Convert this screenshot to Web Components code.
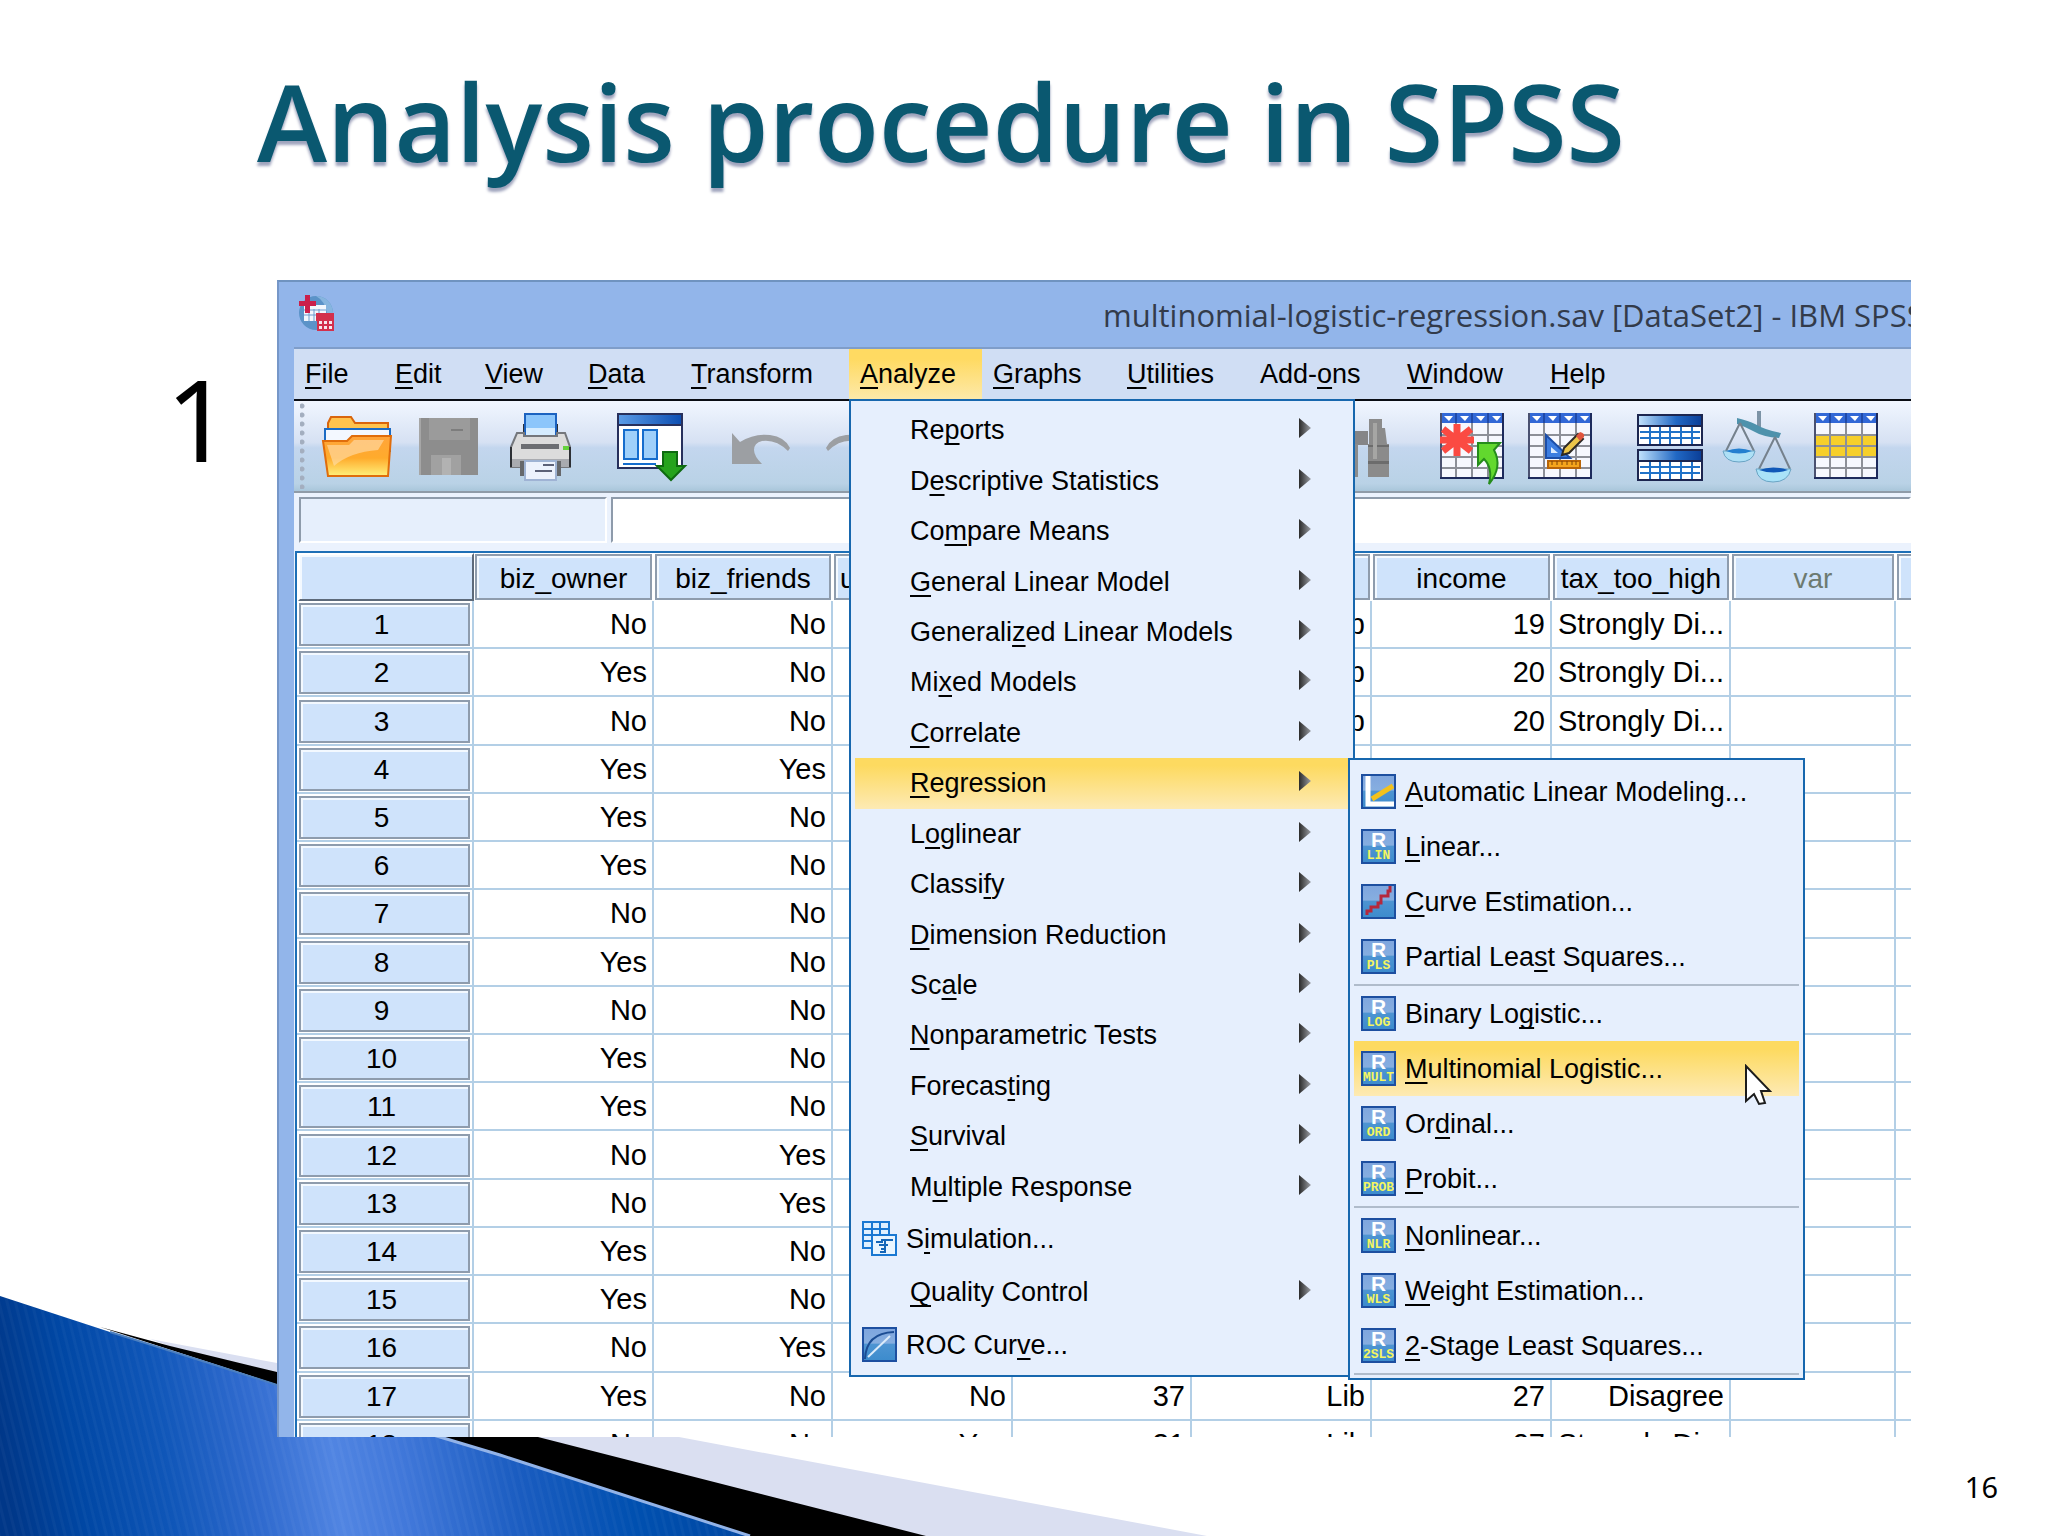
<!DOCTYPE html>
<html lang="en">
<head>
<meta charset="utf-8">
<title>Analysis procedure in SPSS</title>
<style>
body {
  margin: 0;
  background: #fff;
}
</style>
</head>
<body>
<slide-page number="16">
  <span slot="title">Analysis procedure in SPSS</span>
  <span slot="step">1</span>
  <app-window></app-window>
</slide-page>

<script>
// registers an element whose shadow root is a copy of the given markup
function define(name, html, setup) {
    const template = document.createElement("template");
    template.innerHTML = html;
    customElements.define(name, class extends HTMLElement {
        constructor() {
            super();
            this.attachShadow({ mode: "open" });
            this.shadowRoot.appendChild(template.content.cloneNode(true));
        }
        connectedCallback() {
            if (setup && !this.ready) {
                this.ready = true;
                setup(this, this.shadowRoot);
            }
        }
    });
}

define("slide-swoosh", `\
<style>
:host { display: block; }
svg { display: block; }
</style>
<svg width="1220" height="256" viewBox="0 0 1220 256" aria-hidden="true">
  <defs>
    <linearGradient id="blue" gradientUnits="userSpaceOnUse" x1="0" y1="160" x2="720" y2="60">
      <stop offset="0" stop-color="#003788"/>
      <stop offset=".1" stop-color="#0047a4"/>
      <stop offset=".22" stop-color="#0f56b8"/>
      <stop offset=".34" stop-color="#2f6ace"/>
      <stop offset=".45" stop-color="#5185e2"/>
      <stop offset=".54" stop-color="#4178da"/>
      <stop offset=".7" stop-color="#1a5cc0"/>
      <stop offset=".85" stop-color="#0050b0"/>
      <stop offset="1" stop-color="#0047a2"/>
    </linearGradient>
    <pattern id="hatch" width="8" height="8" patternUnits="userSpaceOnUse" patternTransform="rotate(-14)">
      <rect width="3" height="8" fill="#fff" opacity=".03"/>
    </pattern>
  </defs>
  <path d="M150 59 L277 83 L679 157 L1207 256 L700 256 Z" fill="#dadff1"/>
  <path d="M100 47 L170 66 L277 92 L400 122 L538 157 L926 256 L745 256 Z" fill="#000"/>
  <path d="M0 16 L110 52 Q200 80 277 105 L440 157 L500 175 L750 256 L0 256 Z" fill="url(#blue)"/>
  <path d="M0 16 L110 52 Q200 80 277 105 L440 157 L500 175 L750 256 L0 256 Z" fill="url(#hatch)"/>
  <path d="M110 52 Q200 80 277 105 L440 157" fill="none" stroke="#4b7fc0" stroke-width="2"/>
  <path d="M430 154 L500 175 L750 256" fill="none" stroke="#92b3e8" stroke-width="3"/>
</svg>
`);

define("slide-page", `\
<style>
:host {
  position: relative;
  display: grid;
  grid-template-columns: 277px minmax(0, 1fr) 137px;
  grid-template-rows: 280px minmax(0, 1fr) 99px;
  height: 100vh;
  overflow: hidden;
  font-family: "Noto Sans", "Open Sans", sans-serif;
}
h1 {
  grid-column: 1 / -1;
  margin: 0;
  padding: 51px 0 0 257px;
  font: 600 106px/140px "Open Sans", sans-serif;
  white-space: nowrap;
  color: #0a5870;
  text-shadow: 0 4px 3px #9fa4bd;
}
.step {
  padding: 60px 46px 0 0;
  font-size: 114px;
  line-height: 156px;
  text-align: right;
}
slide-swoosh {
  position: absolute;
  left: 0;
  bottom: 0;
}
.window {
  position: relative;
  display: grid;
  min-height: 0;
}
footer {
  grid-column: 1 / -1;
  padding: 28px 50px 0 0;
  font-size: 29px;
  line-height: 44px;
  text-align: right;
}
</style>
<slide-swoosh></slide-swoosh>
<h1><slot name="title"></slot></h1>
<div class="step"><slot name="step"></slot></div>
<div class="window"><slot></slot></div>
<footer></footer>
`, (host, root) => {
    root.querySelector("footer").textContent = host.getAttribute("number");
});

define("menu-bar", `\
<style>
:host {
  display: block;
  background: #d0def4;
  border-bottom: 2px solid #0a0d14;
}
nav {
  display: grid;
  grid-template-columns: 90px 90px 103px 103px 169px 133px 134px 133px 147px 143px 100px;
  height: 50px;
}
button {
  border: 0;
  padding: 0 0 0 11px;
  background: none;
  font: 27px/48px "Liberation Sans", Arial, sans-serif;
  text-align: left;
  color: #000;
}
button.open {
  background: linear-gradient(#ffda62 20%, #fde9a9);
}
u {
  text-decoration-thickness: 2px;
  text-underline-offset: 4px;
  text-decoration-skip-ink: none;
}
</style>
<nav>
  <button><u>F</u>ile</button>
  <button><u>E</u>dit</button>
  <button><u>V</u>iew</button>
  <button><u>D</u>ata</button>
  <button><u>T</u>ransform</button>
  <button class="open" aria-expanded="true"><u>A</u>nalyze</button>
  <button><u>G</u>raphs</button>
  <button><u>U</u>tilities</button>
  <button>Add-<u>o</u>ns</button>
  <button><u>W</u>indow</button>
  <button><u>H</u>elp</button>
</nav>
`);

// a small sheet with a blue heading row, used by three of the tools
const sheet = (band = "") => `
  <rect x="3" y="2" width="64" height="66" fill="#f6f8fe"/>
  ${band}
  <path d="M3 24h64M3 35h64M3 46h64M3 57h64M19 12v56M35 12v56M51 12v56" stroke="#8d9098" stroke-width="2"/>
  <rect x="3" y="2" width="64" height="10" fill="#3268d6"/>
  <path d="M19 2v10M35 2v10M51 2v10" stroke="#1f49a8" stroke-width="2"/>
  <path d="M7 5h9l-4 5zM23 5h9l-4 5zM39 5h9l-4 5zM55 5h9l-4 5z" fill="#fff"/>
  <path d="M4 2v65h62" fill="none" stroke="#4a5170" stroke-width="2"/>
  <path d="M66 2v66M3 67h64" stroke="#1d2a5c" stroke-width="2"/>`;

define("tool-bar", `\
<style>
:host {
  display: flex;
  align-items: center;
  gap: 22px;
  height: 90px;
  border-bottom: 2px solid #8f9ba8;
  background: linear-gradient(#f1f6ff, #d6e1f3 46%, #c3d6ee 52%, #b9d2e6 92%, #a9c6da);
}
.grip {
  width: 6px;
  height: 86px;
  margin: 0 -15px 0 6px;
  background: radial-gradient(circle at 2px 3px, #a3aebf 2px, transparent 3px) 0 0 / 6px 9px;
}
.group { display: flex; }
.near { gap: 4px; }
.far { margin-left: 399px; }
button {
  width: 88px;
  height: 80px;
  border: 0;
  padding: 0;
  background: none;
}
svg { display: block; margin: auto; overflow: visible; }
</style>
<span class="grip"></span>
<div class="group near">
  <button aria-label="Open data document"><svg width="70" height="70" viewBox="0 0 70 70">
    <defs><linearGradient id="f" x1="0" y1="0" x2="0" y2="1"><stop offset="0" stop-color="#ffa43a"/><stop offset=".55" stop-color="#ffab2c"/><stop offset="1" stop-color="#fff07a"/></linearGradient></defs>
    <path d="M6 28V12l3-6h20l4 6h33v20H6z" fill="#ffc34d" stroke="#d9650c" stroke-width="2"/>
    <path d="M3 18h65v22H3z" fill="#f3f8ff" stroke="#1b6bc4" stroke-width="2"/>
    <path d="M1 30h24l5-5h39l-3 40H6z" fill="url(#f)" stroke="#e06d0b" stroke-width="2"/>
    <path d="M5 34h22l5-5h30l-6 10q-28 2-44 16z" fill="#ffe0b0" opacity=".6"/>
  </svg></button>
  <button disabled aria-label="Save this document"><svg width="70" height="70" viewBox="0 0 70 70">
    <path d="M6 7h58v57H6z" fill="#8d8d8d"/>
    <path d="M15 7h41v22H15z" fill="#9b9b9b"/><path d="M37 18h12v2H37z" fill="#7d7d7d"/>
    <path d="M17 44h30v20H17z" fill="#a1a1a1"/><path d="M28 47h9v17h-9z" fill="#b2b2b2"/><path d="M6 7v57" stroke="#a6a6a6" stroke-width="2"/>
  </svg></button>
  <button aria-label="Print"><svg width="70" height="70" viewBox="0 0 70 70">
    <path d="M17 13h35v12H17z" fill="#2d3035"/>
    <path d="M19 3h31v22H19z" fill="#8cc6fb" stroke="#1b62c0" stroke-width="2"/>
    <path d="M20 17h29v7H20z" fill="#d5ecff"/>
    <path d="M11 22h7v3h33v-3h8l5 14v20H5V36z" fill="#dcdcdc" stroke="#74777c" stroke-width="2"/>
    <path d="M6 48h58v8H6z" fill="#a9abb0"/>
    <path d="M15 33h38v5H15z" fill="#6c6e72"/><path d="M57 35h6v4h-6z" fill="#66d23c"/>
    <path d="M14 50h41v15H14z" fill="#66686c"/>
    <path d="M19 50h31v19H19z" fill="#edf2fd" stroke="#9fb3d4" stroke-width="2"/>
    <path d="M37 54h11M29 60h17" stroke="#5c6178" stroke-width="2"/>
    <path d="M5 36v20M64 36v20" stroke="#2d3035" stroke-width="2"/>
  </svg></button>
</div>
<div class="group near">
  <button aria-label="Recall recently used dialogs"><svg width="70" height="70" viewBox="0 0 70 70">
    <defs><linearGradient id="t"><stop offset="0" stop-color="#5a9be6"/><stop offset="1" stop-color="#0e4fb2"/></linearGradient></defs>
    <path d="M2 3h64v54H2z" fill="#fff" stroke="#27305c" stroke-width="2"/>
    <path d="M3 4h62v10H3z" fill="url(#t)"/>
    <path d="M3 14h62" stroke="#27305c" stroke-width="2"/>
    <path d="M8 19h14v29H8zM27 19h14v29H27z" fill="#9fd0fa" stroke="#156dcd" stroke-width="2"/>
    <path d="M7 53h33" stroke="#156dcd" stroke-width="2"/>
    <path d="M47 41h14v14h8L55 69 41 55h6z" fill="#25a31c" stroke="#0e6a10" stroke-width="2"/>
  </svg></button>
</div>
<div class="group near">
  <button disabled aria-label="Undo"><svg width="70" height="70" viewBox="0 0 70 70">
    <path d="M6 22l8 9q14-9 30-7 15 2 20 13l-2 3q-12-12-26-10-8 2-8 9 0 6 8 14H6z" fill="#9c9fa3"/>
  </svg></button>
  <button disabled aria-label="Redo"><svg width="70" height="70" viewBox="0 0 70 70">
    <path d="M66 22l-8 9q-14-9-30-7-15 2-20 13l2 3q12-12 26-10 8 2 8 9 0 6-8 14h30z" fill="#9c9fa3"/>
  </svg></button>
</div>
<div class="group far">
  <button disabled aria-label="Find"><svg width="70" height="70" viewBox="5 0 70 70">
    <path d="M24 20h22v14H24z" fill="#858587"/>
    <path d="M47 8h13v9h3l2 16h2v33H46V33h1z" fill="#8b8b8b"/>
    <path d="M12 8h13v9h3l2 16h6v33H10V33h2z" fill="#8b8b8b"/>
    <path d="M46 34h21v2H46zM46 50h21v3H46z" fill="#6c6c6c"/><path d="M51 12h4v36h-4z" fill="#a6a6a4"/>
  </svg></button>
</div>
<div class="group">
  <button aria-label="Go to case"><svg width="70" height="70" viewBox="0 0 70 70">${sheet()}
    <path d="M20 13v32M6 18l28 22M34 18L6 40M3 29h34" stroke="#fb4a42" stroke-width="7"/>
    <path d="M41 32h22l-6 7q9 17-5 34 4-16-5-25l-6 6z" fill="#62d82e" stroke="#258c1b" stroke-width="2"/>
  </svg></button>
  <button aria-label="Variables"><svg width="70" height="70" viewBox="0 0 70 70">${sheet()}
    <path d="M21 24v23h24z" fill="#3c7de0" stroke="#1c4ea8" stroke-width="2"/><path d="M26 36v6h7z" fill="#dcebff"/>
    <path d="M37 44l2-7 14-14 5 5-14 14z" fill="#ecc64a" stroke="#2d2a26" stroke-width="2"/>
    <path d="M51 25l4-4q5 1 4 5l-4 4z" fill="#e0563e"/>
    <path d="M23 50h32v7H23z" fill="#f5a51c" stroke="#b86508" stroke-width="2"/>
    <path d="M27 50v4M32 50v4M37 50v4M42 50v4M47 50v4M51 50v4" stroke="#7c4506"/>
  </svg></button>
</div>
<div class="group">
  <button aria-label="Split file"><svg width="70" height="70" viewBox="0 0 70 70">
    <defs><linearGradient id="s"><stop offset="0" stop-color="#bfe0fb"/><stop offset=".6" stop-color="#2168c4"/><stop offset="1" stop-color="#0b3f98"/></linearGradient></defs>
    <g id="half">
      <path d="M3 4h64v30H3z" fill="#fff" stroke="#1c2650" stroke-width="2"/>
      <path d="M4 5h62v9H4z" fill="url(#s)"/>
      <path d="M3 15h64" stroke="#1c2650" stroke-width="2"/>
      <path d="M5 21h60M5 27h60M15 16v17M25 16v17M35 16v17M46 16v17M57 16v17" stroke="#2072c8" stroke-width="2"/>
    </g>
    <use href="#half" y="35"/>
  </svg></button>
  <button aria-label="Weight cases"><svg width="70" height="70" viewBox="0 0 70 70">
    <path d="M34 0h4v22h-4z" fill="#7c93a6"/>
    <path d="M14 7q12 3 18 6 10 6 26 9l-2 5q-16-1-26-7-7-4-16-7z" fill="#4e92ac"/>
    <path d="M17 12L3 40M17 12l14 28M52 26L36 58M52 26l15 32" stroke="#75818c" stroke-width="2"/>
    <path d="M0 40h32q-2 11-16 11T0 40z" fill="#aee0f6" stroke="#6aa4c4"/>
    <path d="M3 40q13-5 26 0 -13 5-26 0z" fill="#237fd0"/>
    <path d="M33 58h35q-3 13-18 13T33 58z" fill="#a9e2f8" stroke="#6aa4c4"/>
    <path d="M36 59q14-5 29 0 -14 5-29 0z" fill="#0f58b8"/>
  </svg></button>
  <button aria-label="Select cases"><svg width="70" height="70" viewBox="0 0 70 70">${sheet('<path d="M3 24h64v22H3z" fill="#f6cf2a"/>')}</svg></button>
</div>
`);

define("data-grid", `\
<style>
:host {
  display: block;
  border-top: 2px solid #1d6fb6;
  border-left: 2px solid #1d6fb6;
  background: #fff;
  color: #000;
}
table {
  width: 1701px;
  height: 916px;
  table-layout: fixed;
  border-collapse: separate;
  border-spacing: 0;
  font: 28px/40px "Liberation Sans", Arial, sans-serif;
}
.wide { width: 180px; }
.slim { width: 179px; }
.head { width: 177px; }
.var { width: 165px; }
th, td { padding: 0; font-weight: normal; }
td {
  padding: 0 5px;
  border-right: 2px solid #b3cfe6;
  border-bottom: 2px solid #b3cfe6;
  font-size: 29px;
  text-align: right;
  white-space: nowrap;
  overflow: hidden;
}
tbody th {
  border-right: 2px solid #b3cfe6;
  border-bottom: 2px solid #b3cfe6;
}
th span {
  display: block;
  box-sizing: border-box;
  height: 43px;
  border: 2px solid #8e9cad;
  margin: 2px 2px 1px;
  background: #cfe3fb;
  box-shadow: inset 2px 2px #f3f9ff;
  line-height: 40px;
}
thead span { height: 46px; margin: 1px 2px 1px 1px; line-height: 46px; }
thead .corner {
  height: 48px;
  border-color: #fff #5d6a7a #5d6a7a #fff;
  margin: 0 0 0 1px;
}
thead .partial { padding-left: 4px; text-align: left; }
thead .unused { color: #6d7a70; }
tbody th span { padding-right: 6px; }
</style>
<table>
  <colgroup>
    <col class="head"><col class="wide"><col class="slim"><col class="wide"><col class="slim">
    <col class="wide"><col class="wide"><col class="slim"><col class="var"><col class="wide">
  </colgroup>
  <thead><tr></tr></thead>
  <tbody></tbody>
</table>
`, (host, root) => {
    const heads = ["", "biz_owner", "biz_friends", "u", "", "", "income", "tax_too_high", "var", ""];
    const rows = [
        ["No", "No", "", "", "Lib", "19", "Strongly Di..."],
        ["Yes", "No", "", "", "Lib", "20", "Strongly Di..."],
        ["No", "No", "", "", "Lib", "20", "Strongly Di..."],
        ["Yes", "Yes"], ["Yes", "No"], ["Yes", "No"], ["No", "No"], ["Yes", "No"],
        ["No", "No"], ["Yes", "No"], ["Yes", "No"], ["No", "Yes"], ["No", "Yes"],
        ["Yes", "No"], ["Yes", "No"], ["No", "Yes"],
        ["Yes", "No", "No", "37", "Lib", "27", "Disagree"],
        ["No", "No", "Yes", "31", "Lib", "27", "Strongly Di..."],
    ];
    const kinds = { "": "corner", u: "partial", var: "unused" };

    const header = (text) => {
        const th = document.createElement("th");
        const box = document.createElement("span");
        box.textContent = text;
        th.append(box);
        return th;
    };

    heads.forEach((text, i) => {
        const th = header(text);
        if (kinds[text] && (text || i === 0)) {
            th.firstChild.className = kinds[text];
        }
        root.querySelector("thead tr").append(th);
    });

    rows.forEach((row, n) => {
        const tr = document.createElement("tr");
        tr.append(header(n + 1));
        for (let i = 0; i < 9; i++) {
            const td = document.createElement("td");
            td.textContent = row[i] || "";
            tr.append(td);
        }
        root.querySelector("tbody").append(tr);
    });
});

define("drop-menu", `\
<style>
:host {
  display: grid;
  box-sizing: border-box;
  border: 2px solid #1767ae;
  background: #e6effd;
}
</style>
<slot></slot>
`, (host) => host.setAttribute("role", "menu"));

define("menu-entry", `\
<style>
:host { display: grid; min-height: 0; }
button {
  display: flex;
  align-items: center;
  border: 0;
  padding: 0 0 0 55px;
  background: none;
  color: #000;
  font: 27px/50px "Liberation Sans", Arial, sans-serif;
  text-align: left;
  white-space: nowrap;
}
:host([active]) button { background: linear-gradient(#fdda60 15%, #fdeab4); }
:host([icon]) button { gap: 9px; padding-left: 7px; }
.label { flex: 1; }
::slotted(u) {
  text-decoration-thickness: 2px;
  text-underline-offset: 4px;
  text-decoration-skip-ink: none;
}
.arrow { display: none; margin: 0 38px 4px 0; }
:host([more]) .arrow { display: block; }
</style>
<button role="menuitem">
  <slot name="icon"></slot>
  <span class="label"><slot></slot></span>
  <svg class="arrow" width="12" height="20" viewBox="0 0 12 20" aria-hidden="true">
    <defs><linearGradient id="g"><stop offset="0" stop-color="#2a2a2a"/><stop offset="1" stop-color="#9a9da3"/></linearGradient></defs>
    <path d="M0 0l12 10L0 20z" fill="url(#g)"/>
  </svg>
</button>
`);

// blue tile: a procedure code under an R, or a drawing passed in
define("proc-icon", `\
<style>
:host {
  display: grid;
  box-sizing: border-box;
  width: 35px;
  height: 35px;
  border: 2px solid #1d4fa0;
  background: linear-gradient(#7fa6de, #86aee0 45%, #4d94d2 50%, #3d8ccd);
  justify-items: center;
  overflow: hidden;
}
:host([plain]) { border: 0; background: none; }
b, span { display: none; }
b { font: bold 21px/18px "Liberation Sans", Arial, sans-serif; color: #fff; }
span {
  margin: 0 -3px;
  font: bold 13px/13px "Liberation Mono", monospace;
  color: #f4f560;
}
:host([code]) b, :host([code]) span { display: block; }
</style>
<b>R</b><span></span><slot></slot>
`, (host, root) => {
    root.querySelector("span").textContent = host.getAttribute("code") || "";
});

define("app-window", `\
<style>
:host {
  position: relative;
  display: flex;
  flex-direction: column;
  box-sizing: border-box;
  min-width: 0;
  min-height: 0;
  overflow: hidden;
  border-top: 2px solid #6f93c0;
  border-left: 2px solid #7697c8;
  padding-left: 15px;
  background: #92b5ea;
}
header {
  display: flex;
  align-items: center;
  flex: none;
  height: 65px;
  padding-left: 5px;
  white-space: nowrap;
}
header svg { flex: none; margin: 0 768px 4px 0; }
.title {
  font: 31px/64px "Open Sans", "Noto Sans", sans-serif;
  color: #333b4a;
}
main {
  display: flex;
  flex: 1;
  flex-direction: column;
  min-height: 0;
  border-top: 2px solid #7f9dc9;
  background: #ebf2fd;
}
menu-bar, tool-bar { flex: none; }
.cell {
  display: grid;
  flex: none;
  grid-template-columns: 308px minmax(0, 1fr);
  gap: 4px;
  padding: 4px 0 8px 5px;
}
input {
  box-sizing: border-box;
  width: 100%;
  height: 46px;
  border: 2px solid #8e9bab;
  border-right-color: #fff;
  border-bottom-color: #fff;
  background: #fff;
}
input[readonly] { background: #e6effc; }
data-grid { flex: none; margin-left: 1px; }
.analyze {
  position: absolute;
  left: 570px;
  top: 117px;
  width: 506px;
  height: 978px;
  grid-template-rows: repeat(16, minmax(0, 1fr)) repeat(3, 53px);
  padding: 4px;
}
.regression {
  position: absolute;
  left: 1069px;
  top: 476px;
  width: 457px;
  grid-auto-rows: auto;
  padding: 4px 4px 3px;
}
.regression menu-entry { height: 55px; }
hr {
  width: 100%;
  height: 2px;
  border: 0;
  margin: 0;
  background: #b0bccb;
}
.pointer { position: absolute; left: 1465px; top: 782px; }
</style>
<header>
  <svg width="36" height="36" viewBox="0 0 36 36" aria-hidden="true">
    <circle cx="17" cy="18" r="17" fill="#5b93c8"/>
    <path d="M17 1a17 17 0 0 1 17 17h-6Q26 6 17 1z" fill="#86b5df"/>
    <path d="M5 10h22v16H5z" fill="#f2f7fd"/>
    <path d="M5 15h22M5 20h22M10 14v12M15 14v12M20 14v12" stroke="#6c9cce" stroke-width="1"/>
    <path d="M6 0h5v6h6v5h-6v7H6v-7H0V6h6z" fill="#cb1f4b"/>
    <path d="M18 19h16v17H18z" fill="#f6e6ee"/>
    <path d="M18 19h16v6H18zM18 30h16M18 35h16M19 25v11M24 25v11M29 25v11M34 25v11" fill="#d3304c" stroke="#d3304c" stroke-width="2"/>
  </svg>
  <span class="title">multinomial-logistic-regression.sav [DataSet2] - IBM SPSS</span>
</header>
<main>
  <menu-bar></menu-bar>
  <tool-bar></tool-bar>
  <div class="cell">
    <input aria-label="Cell" readonly>
    <input aria-label="Value">
  </div>
  <data-grid></data-grid>
</main>
<drop-menu class="analyze">
  <menu-entry more>Re<u>p</u>orts</menu-entry>
  <menu-entry more>D<u>e</u>scriptive Statistics</menu-entry>
  <menu-entry more>Co<u>m</u>pare Means</menu-entry>
  <menu-entry more><u>G</u>eneral Linear Model</menu-entry>
  <menu-entry more>Generali<u>z</u>ed Linear Models</menu-entry>
  <menu-entry more>Mi<u>x</u>ed Models</menu-entry>
  <menu-entry more><u>C</u>orrelate</menu-entry>
  <menu-entry more active><u>R</u>egression</menu-entry>
  <menu-entry more>L<u>o</u>glinear</menu-entry>
  <menu-entry more>Classi<u>f</u>y</menu-entry>
  <menu-entry more><u>D</u>imension Reduction</menu-entry>
  <menu-entry more>Sc<u>a</u>le</menu-entry>
  <menu-entry more><u>N</u>onparametric Tests</menu-entry>
  <menu-entry more>Forecas<u>t</u>ing</menu-entry>
  <menu-entry more><u>S</u>urvival</menu-entry>
  <menu-entry more>M<u>u</u>ltiple Response</menu-entry>
  <menu-entry icon><proc-icon slot="icon" plain><svg width="35" height="35" viewBox="0 0 35 35">
    <path d="M1 1h26v26H1z" fill="#dff0ff" stroke="#1a78d2" stroke-width="2"/>
    <path d="M1 8h26M1 14h26M1 20h26M10 1v26M18 1v26" stroke="#1a78d2" stroke-width="2"/>
    <path d="M10 14h24v20H10z" fill="#e9f5ff" stroke="#1a78d2" stroke-width="2"/>
    <path d="M14 21h6v-2h11M17 24h9M19 28h5M18 31h4M23 19v13" fill="none" stroke="#1566b8" stroke-width="2"/>
  </svg></proc-icon>S<u>i</u>mulation...</menu-entry>
  <menu-entry more><u>Q</u>uality Control</menu-entry>
  <menu-entry icon><proc-icon slot="icon"><svg width="31" height="31" viewBox="0 0 31 31">
    <path d="M1 30Q2 4 30 3" fill="none" stroke="#1b4c93" stroke-width="2"/>
    <path d="M4 28L26 7" stroke="#dcebfa" stroke-width="2"/>
  </svg></proc-icon>ROC Cur<u>v</u>e...</menu-entry>
</drop-menu>
<drop-menu class="regression">
  <menu-entry icon><proc-icon slot="icon"><svg width="31" height="31" viewBox="0 0 31 31">
    <path d="M5 0v28h26" fill="none" stroke="#fff" stroke-width="5"/>
    <path d="M9 23L30 10" stroke="#f2c11c" stroke-width="5"/>
  </svg></proc-icon><u>A</u>utomatic Linear Modeling...</menu-entry>
  <menu-entry icon><proc-icon slot="icon" code="LIN"></proc-icon><u>L</u>inear...</menu-entry>
  <menu-entry icon><proc-icon slot="icon"><svg width="31" height="31" viewBox="0 0 31 31">
    <path d="M4 29v-4h4v-4h7v-4h3v-7h7V5h2V0" fill="none" stroke="#b5283c" stroke-width="3"/>
  </svg></proc-icon><u>C</u>urve Estimation...</menu-entry>
  <menu-entry icon><proc-icon slot="icon" code="PLS"></proc-icon>Partial Lea<u>s</u>t Squares...</menu-entry>
  <hr>
  <menu-entry icon><proc-icon slot="icon" code="LOG"></proc-icon>Binary Lo<u>g</u>istic...</menu-entry>
  <menu-entry icon active><proc-icon slot="icon" code="MULT"></proc-icon><u>M</u>ultinomial Logistic...</menu-entry>
  <menu-entry icon><proc-icon slot="icon" code="ORD"></proc-icon>Or<u>d</u>inal...</menu-entry>
  <menu-entry icon><proc-icon slot="icon" code="PROB"></proc-icon><u>P</u>robit...</menu-entry>
  <hr>
  <menu-entry icon><proc-icon slot="icon" code="NLR"></proc-icon><u>N</u>onlinear...</menu-entry>
  <menu-entry icon><proc-icon slot="icon" code="WLS"></proc-icon><u>W</u>eight Estimation...</menu-entry>
  <menu-entry icon><proc-icon slot="icon" code="2SLS"></proc-icon><u>2</u>-Stage Least Squares...</menu-entry>
  <hr>
</drop-menu>
<svg class="pointer" width="28" height="43" viewBox="0 0 28 43" aria-hidden="true">
  <path d="M2 2v35l8-7 5 10 6-1-4-12h9z" fill="#fff" stroke="#1c1c1c" stroke-width="2"/>
</svg>
`);
</script>
</body>
</html>
